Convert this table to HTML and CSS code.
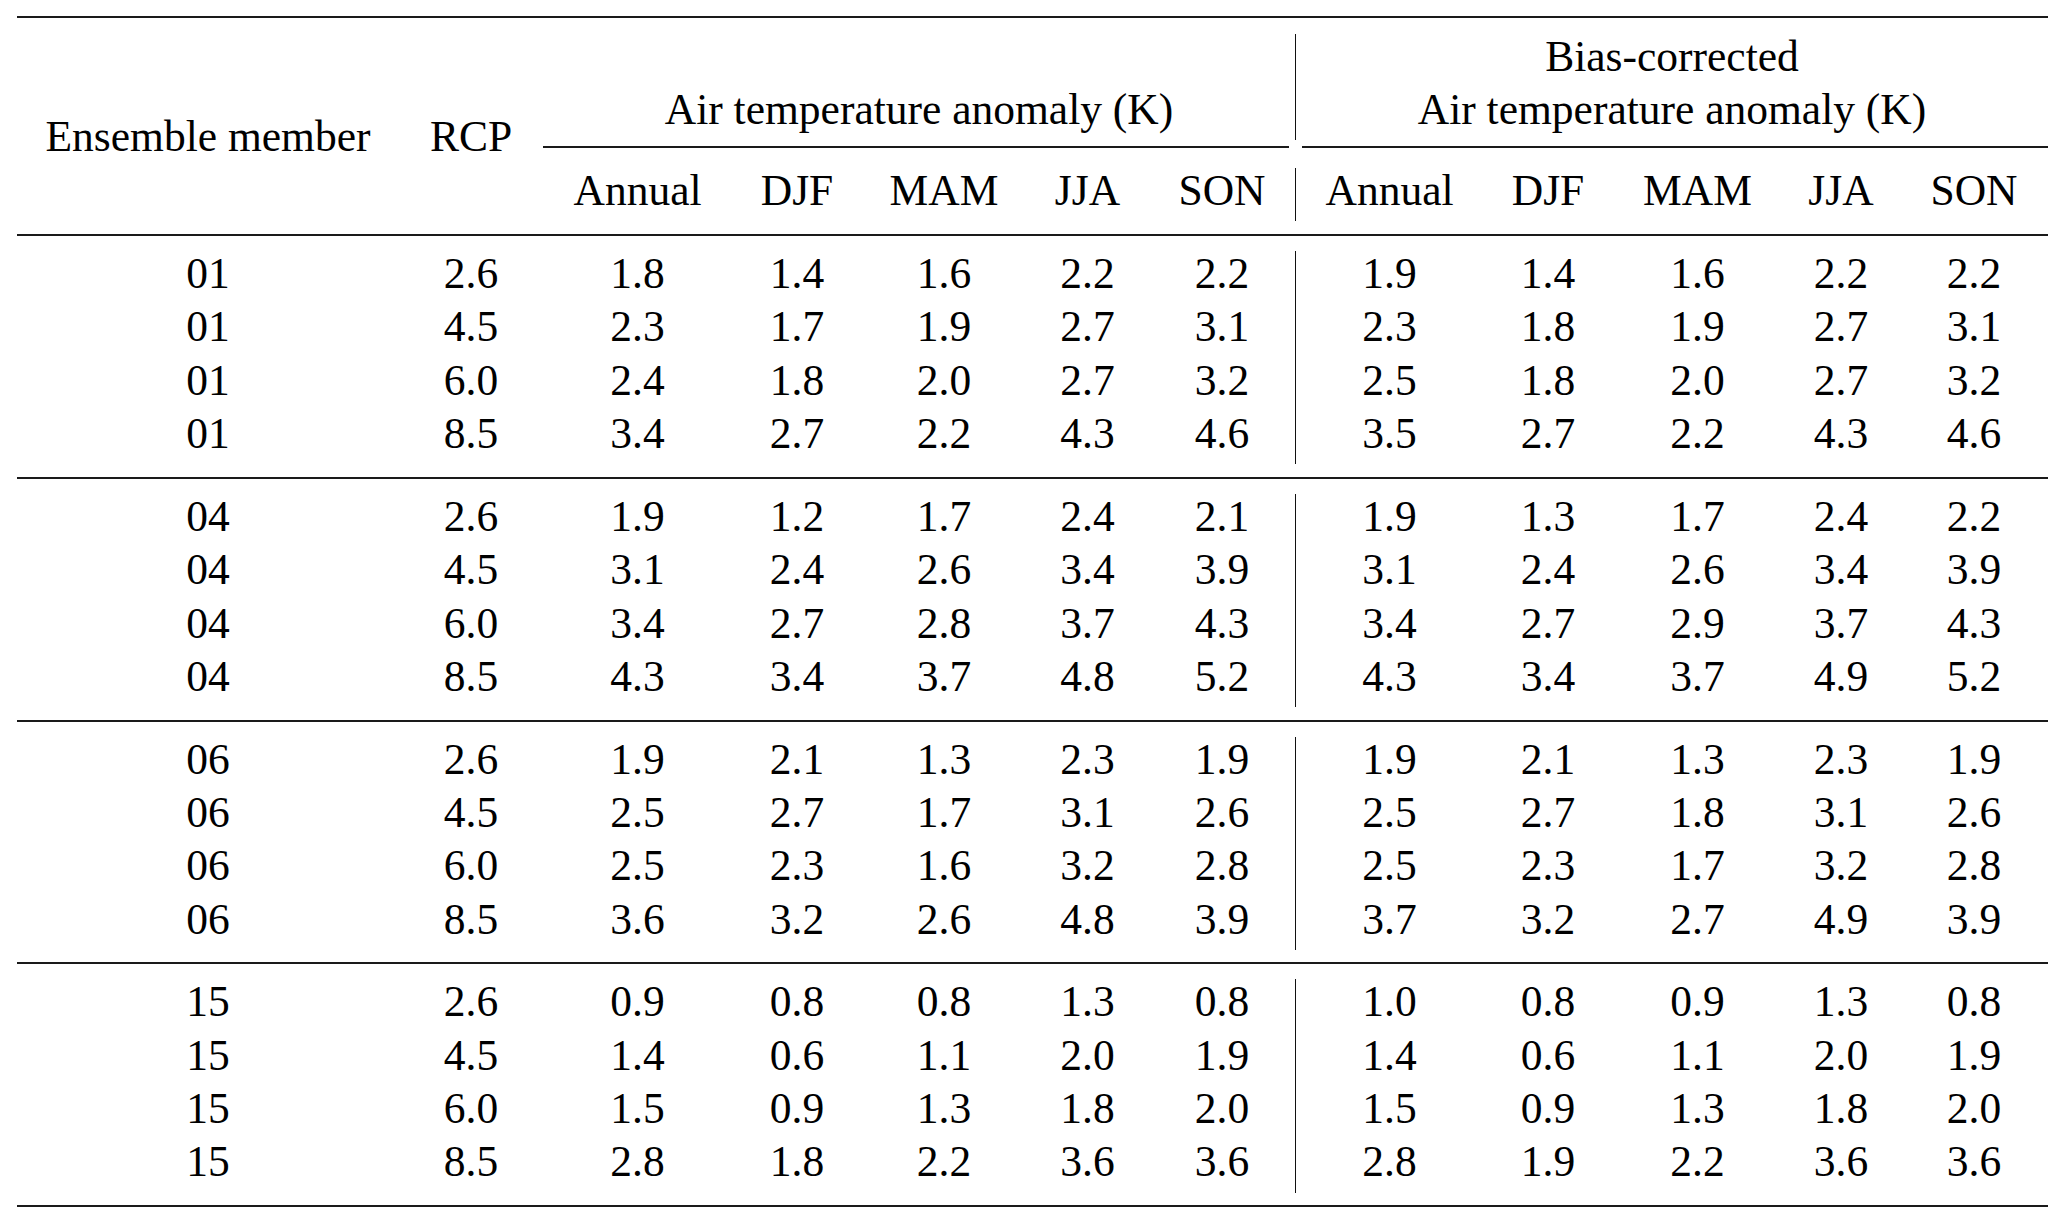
FILE: index.html
```html
<!DOCTYPE html>
<html lang="en">
<head>
<meta charset="utf-8">
<title>Air temperature anomaly table</title>
<link rel="stylesheet" href="styles.css">
</head>
<body>
<div class="table">
  <div class="cols thead">
    <div class="c h-ens">Ensemble member</div>
    <div class="c h-rcp">RCP</div>
    <div class="c h-air">Air temperature anomaly (K)</div>
    <div class="c h-bias1">Bias-corrected</div>
    <div class="c h-bias2">Air temperature anomaly (K)</div>
    <div class="cmid cmid-l"></div>
    <div class="cmid cmid-r"></div>
    <div class="vsep vsep-top"></div>
    <div class="vsep vsep-bot"></div>
    <div class="c h-col" style="grid-column:3">Annual</div>
    <div class="c h-col" style="grid-column:4">DJF</div>
    <div class="c h-col" style="grid-column:5">MAM</div>
    <div class="c h-col" style="grid-column:6">JJA</div>
    <div class="c h-col" style="grid-column:7">SON</div>
    <div class="c h-col" style="grid-column:9">Annual</div>
    <div class="c h-col" style="grid-column:10">DJF</div>
    <div class="c h-col" style="grid-column:11">MAM</div>
    <div class="c h-col" style="grid-column:12">JJA</div>
    <div class="c h-col" style="grid-column:13">SON</div>
  </div>

  <div class="cols group">
    <div class="vsep vsep-all"></div>
    <div class="c">01</div><div class="c">2.6</div><div class="c">1.8</div><div class="c">1.4</div><div class="c">1.6</div><div class="c">2.2</div><div class="c">2.2</div><div class="c">1.9</div><div class="c">1.4</div><div class="c">1.6</div><div class="c">2.2</div><div class="c">2.2</div>
    <div class="c">01</div><div class="c">4.5</div><div class="c">2.3</div><div class="c">1.7</div><div class="c">1.9</div><div class="c">2.7</div><div class="c">3.1</div><div class="c">2.3</div><div class="c">1.8</div><div class="c">1.9</div><div class="c">2.7</div><div class="c">3.1</div>
    <div class="c">01</div><div class="c">6.0</div><div class="c">2.4</div><div class="c">1.8</div><div class="c">2.0</div><div class="c">2.7</div><div class="c">3.2</div><div class="c">2.5</div><div class="c">1.8</div><div class="c">2.0</div><div class="c">2.7</div><div class="c">3.2</div>
    <div class="c">01</div><div class="c">8.5</div><div class="c">3.4</div><div class="c">2.7</div><div class="c">2.2</div><div class="c">4.3</div><div class="c">4.6</div><div class="c">3.5</div><div class="c">2.7</div><div class="c">2.2</div><div class="c">4.3</div><div class="c">4.6</div>
  </div>

  <div class="cols group">
    <div class="vsep vsep-all"></div>
    <div class="c">04</div><div class="c">2.6</div><div class="c">1.9</div><div class="c">1.2</div><div class="c">1.7</div><div class="c">2.4</div><div class="c">2.1</div><div class="c">1.9</div><div class="c">1.3</div><div class="c">1.7</div><div class="c">2.4</div><div class="c">2.2</div>
    <div class="c">04</div><div class="c">4.5</div><div class="c">3.1</div><div class="c">2.4</div><div class="c">2.6</div><div class="c">3.4</div><div class="c">3.9</div><div class="c">3.1</div><div class="c">2.4</div><div class="c">2.6</div><div class="c">3.4</div><div class="c">3.9</div>
    <div class="c">04</div><div class="c">6.0</div><div class="c">3.4</div><div class="c">2.7</div><div class="c">2.8</div><div class="c">3.7</div><div class="c">4.3</div><div class="c">3.4</div><div class="c">2.7</div><div class="c">2.9</div><div class="c">3.7</div><div class="c">4.3</div>
    <div class="c">04</div><div class="c">8.5</div><div class="c">4.3</div><div class="c">3.4</div><div class="c">3.7</div><div class="c">4.8</div><div class="c">5.2</div><div class="c">4.3</div><div class="c">3.4</div><div class="c">3.7</div><div class="c">4.9</div><div class="c">5.2</div>
  </div>

  <div class="cols group">
    <div class="vsep vsep-all"></div>
    <div class="c">06</div><div class="c">2.6</div><div class="c">1.9</div><div class="c">2.1</div><div class="c">1.3</div><div class="c">2.3</div><div class="c">1.9</div><div class="c">1.9</div><div class="c">2.1</div><div class="c">1.3</div><div class="c">2.3</div><div class="c">1.9</div>
    <div class="c">06</div><div class="c">4.5</div><div class="c">2.5</div><div class="c">2.7</div><div class="c">1.7</div><div class="c">3.1</div><div class="c">2.6</div><div class="c">2.5</div><div class="c">2.7</div><div class="c">1.8</div><div class="c">3.1</div><div class="c">2.6</div>
    <div class="c">06</div><div class="c">6.0</div><div class="c">2.5</div><div class="c">2.3</div><div class="c">1.6</div><div class="c">3.2</div><div class="c">2.8</div><div class="c">2.5</div><div class="c">2.3</div><div class="c">1.7</div><div class="c">3.2</div><div class="c">2.8</div>
    <div class="c">06</div><div class="c">8.5</div><div class="c">3.6</div><div class="c">3.2</div><div class="c">2.6</div><div class="c">4.8</div><div class="c">3.9</div><div class="c">3.7</div><div class="c">3.2</div><div class="c">2.7</div><div class="c">4.9</div><div class="c">3.9</div>
  </div>

  <div class="cols group">
    <div class="vsep vsep-all"></div>
    <div class="c">15</div><div class="c">2.6</div><div class="c">0.9</div><div class="c">0.8</div><div class="c">0.8</div><div class="c">1.3</div><div class="c">0.8</div><div class="c">1.0</div><div class="c">0.8</div><div class="c">0.9</div><div class="c">1.3</div><div class="c">0.8</div>
    <div class="c">15</div><div class="c">4.5</div><div class="c">1.4</div><div class="c">0.6</div><div class="c">1.1</div><div class="c">2.0</div><div class="c">1.9</div><div class="c">1.4</div><div class="c">0.6</div><div class="c">1.1</div><div class="c">2.0</div><div class="c">1.9</div>
    <div class="c">15</div><div class="c">6.0</div><div class="c">1.5</div><div class="c">0.9</div><div class="c">1.3</div><div class="c">1.8</div><div class="c">2.0</div><div class="c">1.5</div><div class="c">0.9</div><div class="c">1.3</div><div class="c">1.8</div><div class="c">2.0</div>
    <div class="c">15</div><div class="c">8.5</div><div class="c">2.8</div><div class="c">1.8</div><div class="c">2.2</div><div class="c">3.6</div><div class="c">3.6</div><div class="c">2.8</div><div class="c">1.9</div><div class="c">2.2</div><div class="c">3.6</div><div class="c">3.6</div>
  </div>
</div>
</body>
</html>
```

FILE: styles.css
```css
html, body {
  margin: 0;
  padding: 0;
  background: #ffffff;
}

body {
  color: #000000;
  font-family: "Liberation Serif", "Times New Roman", serif;
  font-size: 43.5px;
}

.table {
  margin: 16px 0 0 17px;
  width: 2031px;
  border-top: 2px solid #1a1a1a;
}

.cols {
  display: grid;
  grid-template-columns: 382px 144px 189px 130px 164px 123px 146px 1px 187px 130px 169px 118px 148px;
  align-items: start;
}

.thead {
  padding: 15.7px 0 13px;
  border-bottom: 2px solid #1a1a1a;
  grid-template-rows: 53.333px 53.333px 27.367px 53.333px;
}

.group {
  padding: 15px 0 12.5px;
  border-bottom: 2px solid #1a1a1a;
  grid-template-rows: repeat(4, 53.333px);
}

.c {
  text-align: center;
  line-height: 45.333px;
  white-space: nowrap;
}

.h-ens {
  grid-column: 1;
  grid-row: 1 / -1;
  margin-top: 80px;
}

.h-rcp {
  grid-column: 2;
  grid-row: 1 / -1;
  margin-top: 80px;
}

.h-air {
  grid-column: 3 / 8;
  grid-row: 2;
}

.h-bias1 {
  grid-column: 9 / 14;
  grid-row: 1;
}

.h-bias2 {
  grid-column: 9 / 14;
  grid-row: 2;
}

.h-col {
  grid-row: 4;
}

.cmid {
  grid-row: 3;
  height: 2px;
  margin-top: 5.7px;
  background: #1a1a1a;
}

.cmid-l {
  grid-column: 3 / 8;
  margin-right: 6px;
}

.cmid-r {
  grid-column: 9 / 14;
  margin-left: 6px;
}

.vsep {
  grid-column: 8;
  align-self: stretch;
  background: #111111;
}

.vsep-top {
  grid-row: 1 / 3;
}

.vsep-bot {
  grid-row: 4;
}

.vsep-all {
  grid-row: 1 / -1;
}
```
